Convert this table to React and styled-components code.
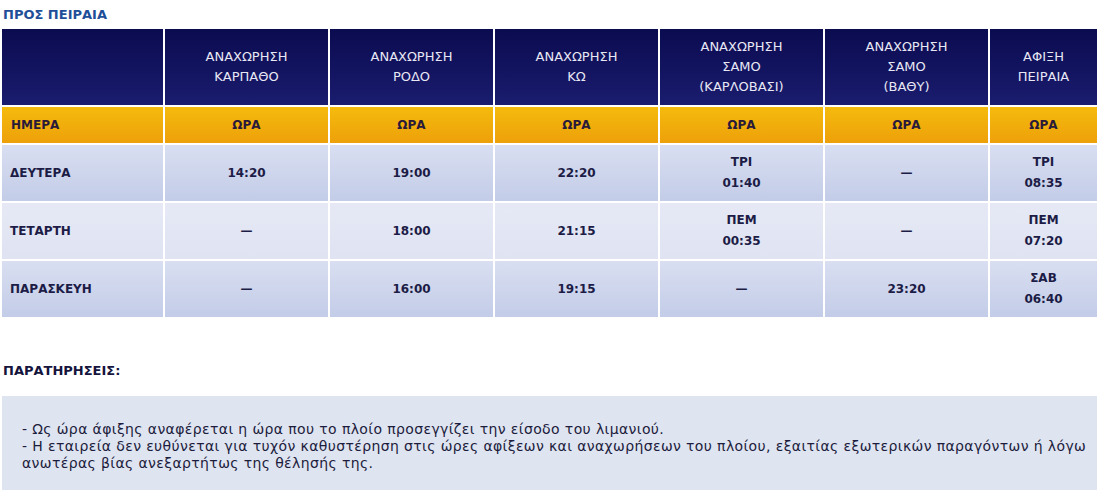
import React from "react";
import styled, { createGlobalStyle } from "styled-components";

const GlobalStyle = createGlobalStyle`
    body {
        margin: 0;
        background: #ffffff;
        font-family: "DejaVu Sans", Verdana, sans-serif;
    }
`

const Page = styled.div`
    width: 1099px;
    padding: 6px 2px 0 2px;
    box-sizing: border-box;
`

const Title = styled.h2`
    margin: 0 0 5px 1px;
    font-size: 13px;
    line-height: 18px;
    font-weight: 700;
    color: #1f4f98;
`

const Schedule = styled.div`
    display: grid;
    grid-template-columns: 161px repeat(5, 163px) 1fr;
    grid-template-rows: 76px 36px repeat(3, 56px);
    gap: 2px;
    background: #ffffff;
`

const HeadCell = styled.div`
    display: flex;
    align-items: center;
    justify-content: center;
    text-align: center;
    background: linear-gradient(#0b0b50, #1a1c6e);
    color: #e8e8f4;
    font-size: 13px;
    line-height: 20px;
`

const SubCell = styled.div`
    display: flex;
    align-items: center;
    justify-content: ${props => props.left ? "flex-start" : "center"};
    padding-left: ${props => props.left ? "9px" : "0"};
    background: linear-gradient(#f5bb0e, #eda009);
    color: #2a1a3a;
    font-size: 12px;
    font-weight: 700;
`

const DataCell = styled.div`
    display: flex;
    align-items: center;
    justify-content: ${props => props.left ? "flex-start" : "center"};
    padding-left: ${props => props.left ? "8px" : "0"};
    text-align: center;
    background: ${props => props.light
        ? "linear-gradient(#e6e9f5, #dfe3f2)"
        : "linear-gradient(#d9dff1, #c3cce8)"};
    color: #1c1c46;
    font-size: 12px;
    font-weight: 700;
    line-height: 21px;
`

const NotesLabel = styled.div`
    margin: 45px 0 0 1px;
    font-size: 13px;
    font-weight: 700;
    line-height: 18px;
    color: #14143c;
`

const NotesBox = styled.div`
    margin-top: 16px;
    padding: 8px 2px 18px 20px;
    background: #dfe4f1;
    color: #1c1c3c;
    font-size: 14px;
    letter-spacing: 0.38px;
    line-height: 17px;
`

const columns = [
    ["ΑΝΑΧΩΡΗΣΗ", "ΚΑΡΠΑΘΟ"],
    ["ΑΝΑΧΩΡΗΣΗ", "ΡΟΔΟ"],
    ["ΑΝΑΧΩΡΗΣΗ", "ΚΩ"],
    ["ΑΝΑΧΩΡΗΣΗ", "ΣΑΜΟ", "(ΚΑΡΛΟΒΑΣΙ)"],
    ["ΑΝΑΧΩΡΗΣΗ", "ΣΑΜΟ", "(ΒΑΘΥ)"],
    ["ΑΦΙΞΗ", "ΠΕΙΡΑΙΑ"],
]

const rows = [
    { day: "ΔΕΥΤΕΡΑ", times: [["14:20"], ["19:00"], ["22:20"], ["ΤΡΙ", "01:40"], ["—"], ["ΤΡΙ", "08:35"]] },
    { day: "ΤΕΤΑΡΤΗ", light: true, times: [["—"], ["18:00"], ["21:15"], ["ΠΕΜ", "00:35"], ["—"], ["ΠΕΜ", "07:20"]] },
    { day: "ΠΑΡΑΣΚΕΥΗ", times: [["—"], ["16:00"], ["19:15"], ["—"], ["23:20"], ["ΣΑΒ", "06:40"]] },
]

function Lines({ items }) {
    return (
        <span>
            {items.map((t, i) => (
                <React.Fragment key={i}>{i > 0 && <br />}{t}</React.Fragment>
            ))}
        </span>
    )
}

function App() {
    return (
        <Page>
            <GlobalStyle />
            <Title>ΠΡΟΣ ΠΕΙΡΑΙΑ</Title>
            <Schedule>
                <HeadCell />
                {columns.map((c, i) => (
                    <HeadCell key={i}><Lines items={c} /></HeadCell>
                ))}
                <SubCell left>ΗΜΕΡΑ</SubCell>
                {columns.map((c, i) => (
                    <SubCell key={i}>ΩΡΑ</SubCell>
                ))}
                {rows.map((r) => (
                    <React.Fragment key={r.day}>
                        <DataCell left light={r.light}>{r.day}</DataCell>
                        {r.times.map((t, i) => (
                            <DataCell key={i} light={r.light}><Lines items={t} /></DataCell>
                        ))}
                    </React.Fragment>
                ))}
            </Schedule>
            <NotesLabel>ΠΑΡΑΤΗΡΗΣΕΙΣ:</NotesLabel>
            <NotesBox>
                <br />
                - Ως ώρα άφιξης αναφέρεται η ώρα που το πλοίο προσεγγίζει την είσοδο του λιμανιού.<br />
                - Η εταιρεία δεν ευθύνεται για τυχόν καθυστέρηση στις ώρες αφίξεων και αναχωρήσεων του πλοίου, εξαιτίας εξωτερικών παραγόντων ή λόγω ανωτέρας βίας ανεξαρτήτως της θέλησής της.
            </NotesBox>
        </Page>
    );
}

export default App;
